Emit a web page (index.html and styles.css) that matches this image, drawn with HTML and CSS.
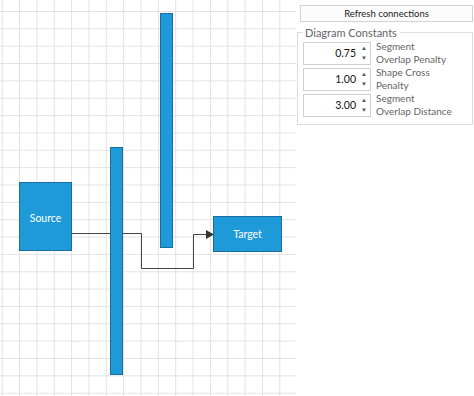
FILE: index.html
```html
<!DOCTYPE html>
<html lang="en">
<head>
    <meta charset="UTF-8">
    <title>Diagram Connections</title>
    <link rel="stylesheet" href="styles.css">
</head>
<body>
    <div class="app">
        <div class="canvas">
            <svg width="296" height="396" viewBox="0 0 296 396">
                <defs>
                    <pattern id="grid" x="1.7" y="11" width="17.35" height="17.35" patternUnits="userSpaceOnUse">
                        <path d="M0 0.5 H17.35 M0.5 0 V17.35" fill="none" stroke="#e2e2e2" stroke-width="1"/>
                    </pattern>
                </defs>
                <rect x="0" y="0" width="296" height="396" fill="url(#grid)"/>

                <!-- connector -->
                <polyline points="72,233.5 141.5,233.5 141.5,268.5 193.5,268.5 193.5,234.5 207,234.5" fill="none" stroke="#444" stroke-width="1"/>
                <polygon points="206,230 214,234.5 206,239" fill="#333"/>

                <!-- obstacles -->
                <rect class="node" x="110.5" y="147.5" width="12" height="227"/>
                <rect class="node" x="160.5" y="13.5" width="12" height="234"/>

                <rect class="node" x="19.5" y="182.5" width="52" height="68"/>
                <text class="label" x="45.5" y="221.5">Source</text>

                <rect class="node" x="213.5" y="216.5" width="68" height="35"/>
                <text class="label" x="247.5" y="238">Target</text>
            </svg>
        </div>

        <div class="panel">
            <button class="refresh">Refresh connections</button>
            <fieldset class="group">
                <legend>Diagram Constants</legend>
                <div class="row">
                    <div class="spin"><span class="value">0.75</span><span class="arrows"><i>&#9650;</i><i>&#9660;</i></span></div>
                    <div class="caption">Segment<br>Overlap Penalty</div>
                </div>
                <div class="row">
                    <div class="spin"><span class="value">1.00</span><span class="arrows"><i>&#9650;</i><i>&#9660;</i></span></div>
                    <div class="caption">Shape Cross<br>Penalty</div>
                </div>
                <div class="row">
                    <div class="spin"><span class="value">3.00</span><span class="arrows"><i>&#9650;</i><i>&#9660;</i></span></div>
                    <div class="caption">Segment<br>Overlap Distance</div>
                </div>
            </fieldset>
        </div>
    </div>
</body>
</html>
```

FILE: styles.css
```css
body {
    margin: 0;
    background: #fff;
    font-family: Lato, "Noto Sans", sans-serif;
    font-size: 10px;
    color: #222;
}
.app {
    display: flex;
    width: 474px;
    height: 396px;
    overflow: hidden;
}
.canvas {
    width: 296px;
    flex: none;
}
.canvas svg {
    display: block;
}
.node {
    fill: #1f9ad9;
    stroke: #1b6d9f;
    stroke-width: 1;
}
.label {
    fill: #fff;
    font-family: Lato, "Noto Sans", sans-serif;
    font-size: 10.5px;
    text-anchor: middle;
}
.panel {
    flex: 1;
    display: flex;
    flex-direction: column;
    padding: 5px 1px 0 4px;
}
.refresh {
    height: 17px;
    margin: 0;
    padding: 0;
    border: 1px solid #d2d2d2;
    background: #fcfcfc;
    font-family: Lato, "Noto Sans", sans-serif;
    font-size: 9.5px;
    color: #222;
    line-height: 15px;
}
.group {
    margin: 4px 0 0 -3px;
    padding: 1px 6px 6px 5px;
    border: 1px solid #dcdcdc;
    display: flex;
    flex-direction: column;
}
.group legend {
    padding: 0 3px 0 2px;
    margin-left: 0;
    color: #666;
    font-size: 11px;
}
.row {
    display: flex;
    align-items: center;
    gap: 5px;
    height: 26px;
}
.spin {
    box-sizing: border-box;
    width: 68px;
    height: 23px;
    flex: none;
    border: 1px solid #d0d0d0;
    display: flex;
    align-items: center;
    justify-content: flex-end;
    font-size: 10.5px;
    color: #111;
}
.spin .value {
    margin-right: 3px;
}
.arrows {
    display: flex;
    flex-direction: column;
    width: 10px;
    align-items: center;
    line-height: 10px;
    margin-right: 1px;
}
.arrows i {
    font-style: normal;
    font-size: 6px;
    color: #555;
}
.caption {
    color: #666;
    font-size: 10px;
    line-height: 13px;
}
```
